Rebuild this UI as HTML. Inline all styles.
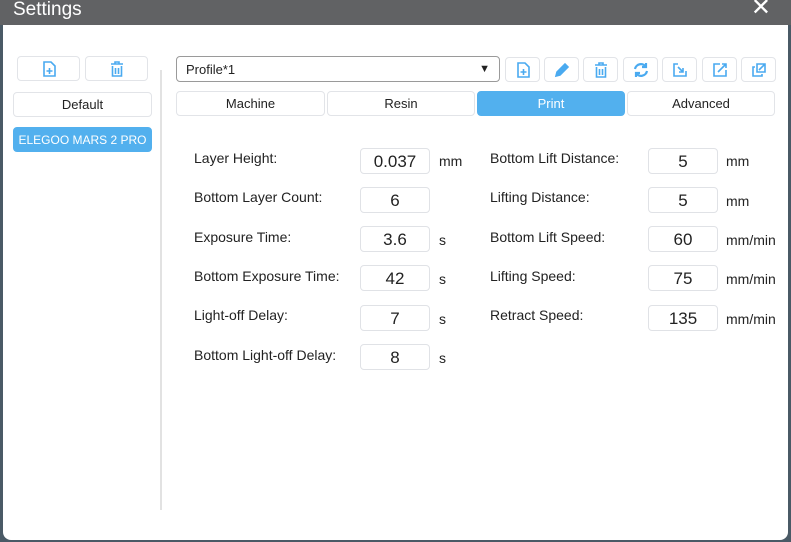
<!DOCTYPE html>
<html><head><style>
*{box-sizing:border-box;margin:0;padding:0}
body{width:791px;height:542px;background:#4a5a66;position:relative;overflow:hidden;font-family:"Liberation Sans",sans-serif;color:#222}
.title{position:absolute;left:0;top:0;width:791px;height:25px;background:#616264;color:#fff;font-size:19px;padding-left:13px;line-height:20px}
.x{position:absolute;right:20px;top:-2px;color:#fff;font-size:24px;font-weight:300}
.win{position:absolute;left:3px;top:25px;width:785px;height:515px;background:#fff;border-radius:0 0 8px 8px}
.a{position:absolute}
.btn{position:absolute;border:1px solid #e2e4e8;border-radius:4px;background:#fff;display:flex;align-items:center;justify-content:center;font-size:13px;white-space:nowrap}
.lbl{position:absolute;font-size:14px}
.in{position:absolute;width:70px;height:26px;border:1px solid #e0e2e6;border-radius:4px;text-align:center;font-size:17px;line-height:25px}
.u{position:absolute;font-size:14px}
svg{stroke:#4aaaf0;fill:none;stroke-width:1.6}
</style></head><body>
<div class="title">Settings<span class="x">✕</span></div>
<div class="win"></div>
<div class="btn" style="left:17px;top:56px;width:63px;height:25px"><svg width="14" height="16"><path d="M2 1h7l4 4v10H2z"/><path d="M7.5 7v6M4.5 10h6"/></svg></div>
<div class="btn" style="left:85px;top:56px;width:63px;height:25px"><svg width="16" height="16"><path d="M2 3h12M6 3V1h4v2M3.5 5v10h9V5M6.5 7v6M9.5 7v6"/></svg></div>
<div class="btn" style="left:13px;top:92px;width:139px;height:25px">Default</div>
<div class="btn" style="left:13px;top:127px;width:139px;height:25px;background:#52b0ee;border-color:#52b0ee;color:#fff;font-size:12px">ELEGOO MARS 2 PRO</div>
<div class="a" style="left:160px;top:70px;width:2px;height:440px;background:#e2e2e2"></div>
<div class="btn" style="left:176px;top:56px;width:324px;height:26px;border-color:#9a9a9a;justify-content:space-between;padding:0 9px">Profile*1<span style="font-size:11px">▼</span></div>
<div class="btn" style="left:505px;top:57px;width:35px;height:25px"><svg width="14" height="16"><path d="M2 1h7l4 4v10H2z"/><path d="M7.5 7v6M4.5 10h6"/></svg></div>
<div class="btn" style="left:544px;top:57px;width:35px;height:25px"><svg width="16" height="16"><path d="M2 14l1-4 8-8 3 3-8 8z" fill="#4aaaf0"/></svg></div>
<div class="btn" style="left:583px;top:57px;width:35px;height:25px"><svg width="16" height="16"><path d="M2 3h12M6 3V1h4v2M3.5 5v10h9V5M6.5 7v6M9.5 7v6"/></svg></div>
<div class="btn" style="left:623px;top:57px;width:35px;height:25px"><svg width="18" height="18" style="stroke-width:2.2"><path d="M3 8a6 6 0 0 1 11-2M15 10a6 6 0 0 1-11 2"/><path d="M14 2v4h-4M4 16v-4h4"/></svg></div>
<div class="btn" style="left:662px;top:57px;width:35px;height:25px"><svg width="16" height="16"><path d="M6 2H2v12h12v-5"/><path d="M6 5l5 5M11 6v4H7"/></svg></div>
<div class="btn" style="left:702px;top:57px;width:35px;height:25px"><svg width="16" height="16"><path d="M8 2H2v12h12V8"/><path d="M6 10l8-8M10 2h4v4"/></svg></div>
<div class="btn" style="left:741px;top:57px;width:35px;height:25px"><svg width="16" height="16"><path d="M4 5H2v9h9v-2"/><path d="M6 2h8v8H6z M8 8l6-6"/></svg></div>
<div class="btn" style="left:176px;top:91px;width:149px;height:25px">Machine</div>
<div class="btn" style="left:327px;top:91px;width:148px;height:25px">Resin</div>
<div class="btn" style="left:477px;top:91px;width:148px;height:25px;background:#52b0ee;border-color:#52b0ee;color:#fff">Print</div>
<div class="btn" style="left:627px;top:91px;width:148px;height:25px">Advanced</div>

<div class="lbl" style="left:194px;top:150px">Layer Height:</div><div class="in" style="left:360px;top:148px">0.037</div><div class="u" style="left:439px;top:153px">mm</div>
<div class="lbl" style="left:194px;top:189px">Bottom Layer Count:</div><div class="in" style="left:360px;top:187px">6</div>
<div class="lbl" style="left:194px;top:229px">Exposure Time:</div><div class="in" style="left:360px;top:226px">3.6</div><div class="u" style="left:439px;top:232px">s</div>
<div class="lbl" style="left:194px;top:268px">Bottom Exposure Time:</div><div class="in" style="left:360px;top:265px">42</div><div class="u" style="left:439px;top:271px">s</div>
<div class="lbl" style="left:194px;top:307px">Light-off Delay:</div><div class="in" style="left:360px;top:305px">7</div><div class="u" style="left:439px;top:311px">s</div>
<div class="lbl" style="left:194px;top:347px">Bottom Light-off Delay:</div><div class="in" style="left:360px;top:344px">8</div><div class="u" style="left:439px;top:350px">s</div>

<div class="lbl" style="left:490px;top:150px">Bottom Lift Distance:</div><div class="in" style="left:648px;top:148px">5</div><div class="u" style="left:726px;top:153px">mm</div>
<div class="lbl" style="left:490px;top:189px">Lifting Distance:</div><div class="in" style="left:648px;top:187px">5</div><div class="u" style="left:726px;top:193px">mm</div>
<div class="lbl" style="left:490px;top:229px">Bottom Lift Speed:</div><div class="in" style="left:648px;top:226px">60</div><div class="u" style="left:726px;top:232px">mm/min</div>
<div class="lbl" style="left:490px;top:268px">Lifting Speed:</div><div class="in" style="left:648px;top:265px">75</div><div class="u" style="left:726px;top:271px">mm/min</div>
<div class="lbl" style="left:490px;top:307px">Retract Speed:</div><div class="in" style="left:648px;top:305px">135</div><div class="u" style="left:726px;top:311px">mm/min</div>
</body></html>
